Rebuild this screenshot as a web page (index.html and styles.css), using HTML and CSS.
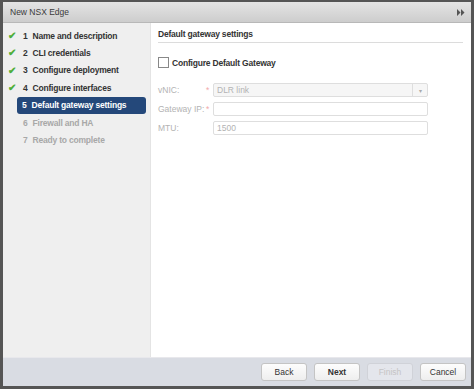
FILE: index.html
```html
<!DOCTYPE html>
<html lang="en">
<head>
  <meta charset="UTF-8">
  <title>New NSX Edge</title>
  <link rel="stylesheet" href="styles.css">
</head>
<body>
  <div class="dialog">
    <div class="title-bar">
      <span class="title">New NSX Edge</span>
      <svg class="collapse-icon" width="8" height="7" viewBox="0 0 8 7">
        <path d="M0 0 L3.5 3.5 L0 7 Z M4 0 L7.5 3.5 L4 7 Z" fill="#555"/>
      </svg>
    </div>

    <div class="main">
      <ul class="steps">
        <li class="step done"><span class="check">&#10004;</span><span class="num">1</span>Name and description</li>
        <li class="step done"><span class="check">&#10004;</span><span class="num">2</span>CLI credentials</li>
        <li class="step done"><span class="check">&#10004;</span><span class="num">3</span>Configure deployment</li>
        <li class="step done"><span class="check">&#10004;</span><span class="num">4</span>Configure interfaces</li>
        <li class="step current"><span class="num">5</span>Default gateway settings</li>
        <li class="step todo"><span class="num">6</span>Firewall and HA</li>
        <li class="step todo"><span class="num">7</span>Ready to complete</li>
      </ul>

      <div class="content">
        <div class="section-title">Default gateway settings</div>

        <label class="check-row">
          <span class="checkbox"></span>
          Configure Default Gateway
        </label>

        <div class="form">
          <div class="form-row">
            <span class="form-label">vNIC:</span>
            <span class="req">*</span>
            <div class="select">
              <span class="select-value">DLR link</span>
              <span class="select-arrow">&#9662;</span>
            </div>
          </div>
          <div class="form-row">
            <span class="form-label">Gateway IP:</span>
            <span class="req">*</span>
            <div class="input"></div>
          </div>
          <div class="form-row">
            <span class="form-label">MTU:</span>
            <span class="req"></span>
            <div class="input">1500</div>
          </div>
        </div>
      </div>
    </div>

    <div class="footer">
      <button class="btn">Back</button>
      <button class="btn primary">Next</button>
      <button class="btn disabled">Finish</button>
      <button class="btn">Cancel</button>
    </div>
  </div>
</body>
</html>
```

FILE: styles.css
```css
html, body {
  height: 100%;
}

body {
  margin: 0;
  background: #555555;
  font-family: 'Liberation Sans', Arial, sans-serif;
  font-size: 8.5px;
  color: #333;
}

.dialog {
  box-sizing: border-box;
  height: 100%;
  padding: 2px 3px 3px 3px;
  display: flex;
  flex-direction: column;
}

/* title bar */
.title-bar {
  height: 20px;
  flex: none;
  display: flex;
  align-items: center;
  justify-content: space-between;
  padding: 0 6px 0 7px;
  background: linear-gradient(#e4e4e4, #cdcdcd);
  border-bottom: 1px solid #b8b8b8;
}

.title {
  color: #3a3a3a;
  font-size: 8.5px;
}

.collapse-icon {
  display: block;
}

.main {
  flex: 1;
  display: flex;
  min-height: 0;
}

/* step list */
.steps {
  list-style: none;
  margin: 0;
  padding: 4px 4px 0 0;
  width: 143px;
  background: #efefef;
  border-right: 1px solid #e4e4e4;
}

.step {
  height: 17.4px;
  display: flex;
  align-items: center;
  padding-left: 20px;
  font-weight: bold;
  color: #333;
  white-space: nowrap;
  position: relative;
  letter-spacing: -0.2px;
}

.step .num {
  margin-right: 5px;
}

.check {
  position: absolute;
  left: 5px;
  top: 3px;
  color: #4fae3a;
  font-size: 10px;
}

.step.current {
  margin-left: 14px;
  padding-left: 5px;
  background: #24487a;
  color: #fff;
  border-radius: 3px;
}

.step.todo {
  color: #a8a8a8;
}

/* right panel */
.content {
  flex: 1;
  background: #fff;
  padding: 6px 8px 0 7px;
}

.section-title {
  color: #333;
  font-weight: bold;
  letter-spacing: -0.2px;
  padding: 0 0 3px 0;
  border-bottom: 1px solid #dcdcdc;
}

.check-row {
  display: flex;
  align-items: center;
  margin-top: 14px;
  font-weight: bold;
  letter-spacing: -0.2px;
  color: #333;
}

.checkbox {
  width: 9px;
  height: 9px;
  border: 1px solid #888;
  background: #fff;
  margin-right: 3px;
}

.form {
  margin-top: 15px;
  display: flex;
  flex-direction: column;
  gap: 5px;
}

.form-row {
  display: flex;
  align-items: center;
  color: #b3b3b3;
  white-space: nowrap;
}

.form-label {
  width: 48px;
}

.req {
  width: 7px;
  color: #f2a9a9;
}

.select,
.input {
  box-sizing: border-box;
  width: 215px;
  height: 14px;
  border: 1px solid #dedede;
  border-radius: 2px;
  display: flex;
  align-items: center;
  padding-left: 3px;
  color: #b3b3b3;
}

.select {
  background: #f6f6f6;
  padding-right: 0;
}

.select-value {
  flex: 1;
}

.select-arrow {
  width: 14px;
  height: 100%;
  border-left: 1px solid #dedede;
  font-size: 6px;
  display: flex;
  align-items: center;
  justify-content: center;
  color: #aaa;
}

/* footer */
.footer {
  height: 29px;
  flex: none;
  background: #d9dce3;
  border-top: 1px solid #e8e8ec;
  display: flex;
  align-items: center;
  justify-content: flex-end;
  gap: 7px;
  padding-right: 5px;
  box-sizing: border-box;
}

.btn {
  width: 46px;
  height: 18px;
  padding: 0;
  font-family: inherit;
  font-size: 8.5px;
  color: #333;
  background: linear-gradient(#fdfdfd, #eeeeee);
  border: 1px solid #c4c4c4;
  border-radius: 3px;
}

.btn.primary {
  font-weight: bold;
}

.btn.disabled {
  color: #c4c4c4;
  background: #e4e6ec;
  border-color: #d0d2d8;
}
```
